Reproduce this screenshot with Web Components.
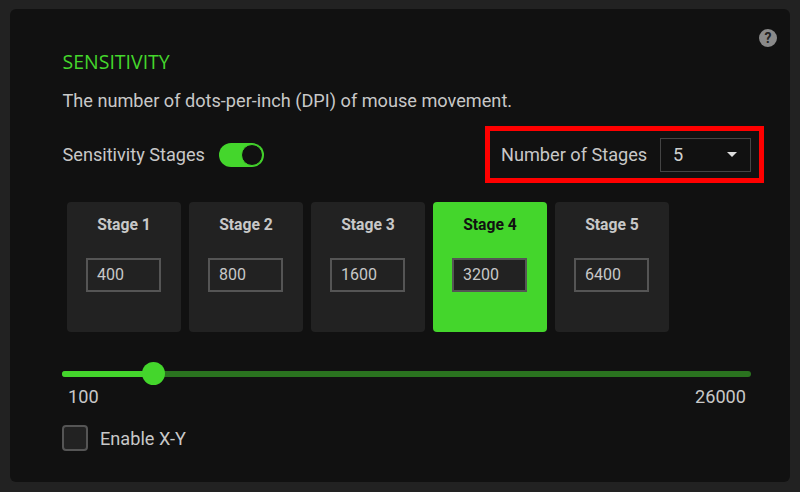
<!DOCTYPE html>
<html><head><meta charset="utf-8">
<style>
html,body{margin:0;padding:0;background:#222;width:800px;height:492px;overflow:hidden}
body{font-family:Roboto,sans-serif;color:#c8c8c8}
</style></head><body>
<template id="t-panel"><style>
:host{display:block;position:relative;box-sizing:border-box;width:780px;height:473px;margin:9px 10px 0;background:#111;border-radius:6px;padding:42px 39px 0 52px}
.help{position:absolute;left:749px;top:20px;width:18px;height:18px;border-radius:50%;background:#8a8a8a;color:#222;font:700 14px/18px Roboto,sans-serif;text-align:center}
h2{margin:0;font:400 19.5px/22px "Open Sans",sans-serif;color:#44d62c;height:22px;padding-left:.5px}
p{margin:17px 0 0;font-size:18.15px;line-height:22px;color:#c8c8c8;padding-left:.5px}
.row{display:flex;justify-content:space-between;align-items:center;margin-top:14px;height:57px}
.left{display:flex;align-items:center;gap:13.5px;font-size:18.15px;padding-left:.5px}
.cards{display:flex;gap:8px;margin:19px 0 0 5px}
</style>
<div class="help">?</div>
<h2>SENSITIVITY</h2>
<p>The number of dots-per-inch (DPI) of mouse movement.</p>
<div class="row"><div class="left">Sensitivity Stages <x-toggle></x-toggle></div><x-stages value="5"></x-stages></div>
<div class="cards"><slot></slot></div>
<x-slider></x-slider>
<x-check>Enable X-Y</x-check>
</template>
<template id="t-toggle"><style>
:host{display:block;width:45px;height:24px;box-sizing:border-box;border-radius:12px;background:#44d62c;position:relative}
i{position:absolute;right:1px;top:1px;border:1px solid #44d62c;border-radius:50%;background:#111;box-sizing:border-box;width:22px;height:22px}
</style><i></i></template>
<template id="t-stages"><style>
:host{display:flex;align-items:center;justify-content:space-between;box-sizing:border-box;width:279px;height:57px;border:5px solid #f00;margin-right:-13px;padding:0 8px 0 11px;font-size:18.15px}
.sel{box-sizing:border-box;width:91px;height:34px;border:1px solid #444;display:flex;align-items:center;justify-content:space-between;padding:0 13px 0 12px;color:#d0d0d0}
.tri{width:0;height:0;border:5.5px solid transparent;border-top:5px solid #ddd;border-bottom:0}
</style>Number of Stages<div class="sel"><span id="v"></span><span class="tri"></span></div></template>
<template id="t-card"><style>
:host{display:flex;flex-direction:column;align-items:center;box-sizing:border-box;width:114px;height:130px;border-radius:4px;background:#222;padding-top:14px;color:#c8c8c8}
:host([active]){background:#44d62c;color:#111}
.t{font-weight:700;font-size:15.7px;line-height:18px;height:18px}
.i{margin:24px 0 0 19px;align-self:flex-start;box-sizing:border-box;width:75px;height:34px;border:2px solid #555;background:#222;color:#c8c8c8;font-size:16px;line-height:30px;padding-left:9px}
</style><div class="t"><slot></slot></div><div class="i" id="v"></div></template>
<template id="t-slider"><style>
:host{display:block;margin-top:39px;position:relative}
.track{height:6px;border-radius:3px;background:#2a731f;position:relative}
.fill{position:absolute;left:0;top:0;bottom:0;width:91px;border-radius:3px;background:#44d62c}
.th{position:absolute;left:80px;top:-9px;width:23px;height:23px;border-radius:50%;background:#44d62c}
.l{display:flex;justify-content:space-between;padding:0 5px 0 6px;font-size:18.15px;line-height:20px;margin-top:10px;color:#c8c8c8}
</style><div class="track"><div class="fill"></div><div class="th"></div></div><div class="l"><span>100</span><span>26000</span></div></template>
<template id="t-check"><style>
:host{display:flex;align-items:center;gap:12px;margin-top:18px;font-size:18.15px;color:#c8c8c8}
i{display:block;box-sizing:border-box;width:26px;height:26px;border:2px solid #555;border-radius:4px;background:#222}
</style><i></i><slot></slot></template>
<script>
function reg(name){customElements.define(name,class extends HTMLElement{constructor(){super();const r=this.attachShadow({mode:'open'});r.appendChild(document.getElementById('t-'+name.slice(2)).content.cloneNode(true));}
connectedCallback(){const v=this.shadowRoot.getElementById('v');if(v)v.textContent=this.getAttribute('value');}});}
['x-panel','x-toggle','x-stages','x-card','x-slider','x-check'].forEach(reg);
</script>
<x-panel>
<x-card value="400">Stage 1</x-card>
<x-card value="800">Stage 2</x-card>
<x-card value="1600">Stage 3</x-card>
<x-card value="3200" active>Stage 4</x-card>
<x-card value="6400">Stage 5</x-card>
</x-panel>
</body></html>
